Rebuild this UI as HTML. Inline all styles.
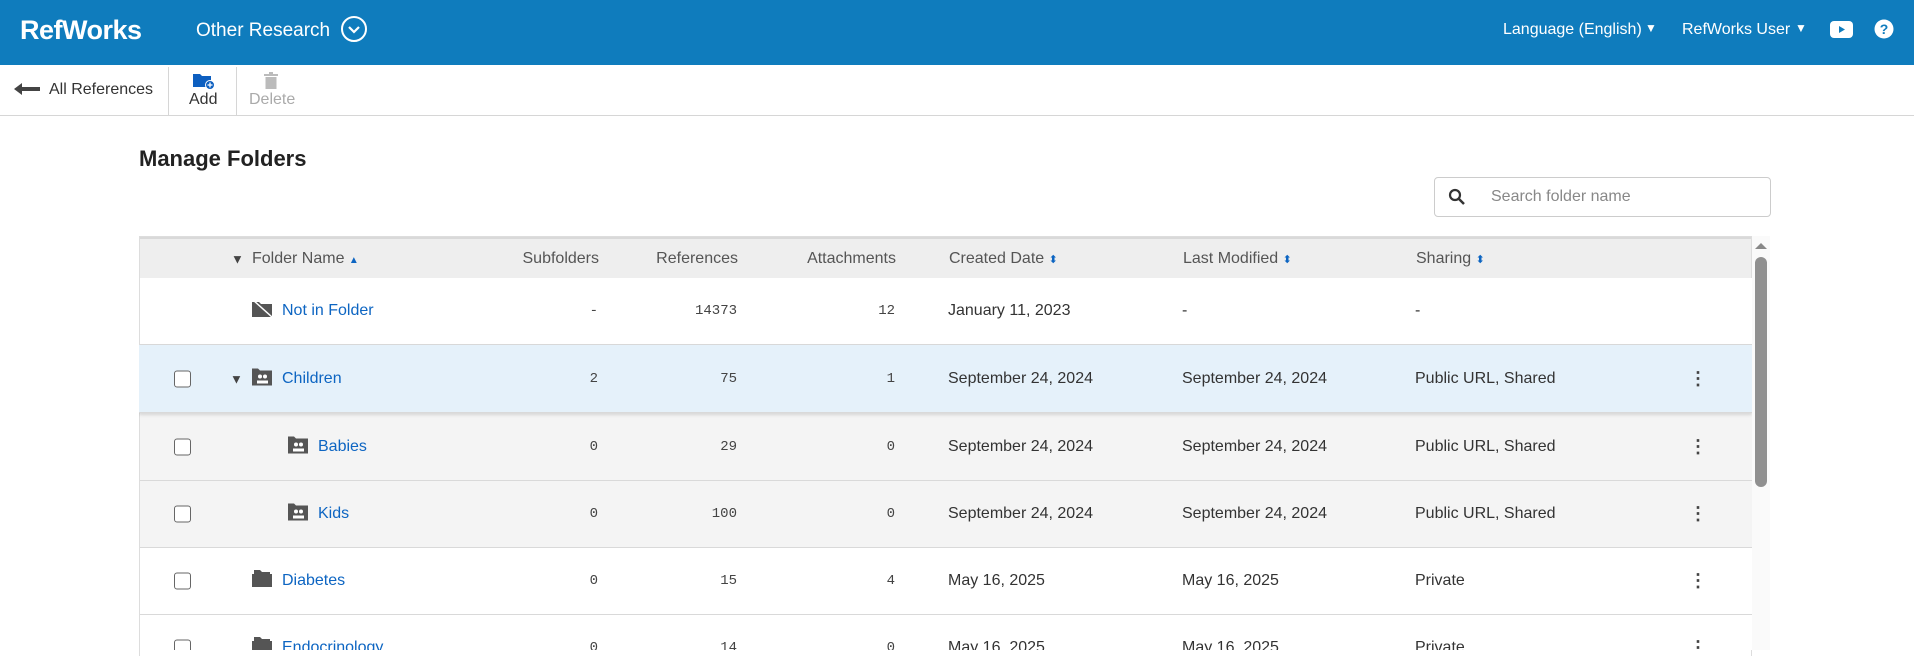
<!DOCTYPE html>
<html><head><meta charset="utf-8"><style>
*{box-sizing:border-box;margin:0;padding:0}
body{width:1914px;height:650px;overflow:hidden;background:#fff;font-family:"Liberation Sans",Arial,sans-serif;color:#333;position:relative}
.abs{position:absolute}
.hdr{left:0;top:0;width:1914px;height:65px;background:#0f7cbd;color:#fff}
.tb{left:0;top:65px;width:1914px;height:51px;border-bottom:1px solid #d6d6d6}
.table{left:139px;top:236px;width:1613px;height:420px;border:1px solid #ddd;border-bottom:none;overflow:hidden}
.row{position:absolute;left:0;width:1613px;border-bottom:1px solid #d9d9d9;font-size:16px}
.row span{position:absolute;top:50%;transform:translateY(-50%);white-space:nowrap}
.num{font-family:"Liberation Mono",monospace;font-size:14px;color:#444}
.link{color:#0d65c2}
.cb{width:17px;height:17px;border:1.5px solid #666;border-radius:3px;background:#fff}
.keb{font-weight:bold;font-size:18px;color:#444}
.hrow span{color:#555}
</style></head><body>
<div class="abs hdr">
 <div class="abs" style="left:20px;top:15px;font-size:27px;font-weight:bold;letter-spacing:-0.5px">RefWorks</div>
 <div class="abs" style="left:196px;top:20px;font-size:19px">Other Research</div>
 <svg class="abs" style="left:340px;top:15px" width="28" height="28" viewBox="0 0 28 28"><circle cx="14" cy="14" r="12" fill="none" stroke="#fff" stroke-width="2"/><path d="M9 12l5 5 5-5" fill="none" stroke="#fff" stroke-width="2.2"/></svg>
 <div class="abs" style="left:1503px;top:21px;font-size:16px">Language (English)</div>
 <div class="abs" style="left:1645px;top:21px;font-size:12px">▼</div>
 <div class="abs" style="left:1682px;top:21px;font-size:16px">RefWorks User</div>
 <div class="abs" style="left:1795px;top:21px;font-size:12px">▼</div>
 <svg class="abs" style="left:1830px;top:21px" width="23" height="17" viewBox="0 0 23 17"><rect width="23" height="17" rx="4" fill="#fff"/><path d="M9 5l6 3.5-6 3.5z" fill="#0f7cbd"/></svg>
 <svg class="abs" style="left:1874px;top:19px" width="20" height="20" viewBox="0 0 20 20"><circle cx="10" cy="10" r="9.5" fill="#fff"/><text x="10" y="15" text-anchor="middle" font-family="Liberation Sans" font-weight="bold" font-size="14" fill="#0f7cbd">?</text></svg>
</div>
<div class="abs tb">
 <svg class="abs" style="left:14px;top:17px" width="26" height="14" viewBox="0 0 26 14"><path d="M0 7l8-6v4h18v4H8v4z" fill="#444"/></svg>
 <div class="abs" style="left:49px;top:16px;font-size:16px;color:#333">All References</div>
 <div class="abs" style="left:168px;top:2px;width:1px;height:48px;background:#d6d6d6"></div>
 <svg class="abs" style="left:193px;top:7px" width="22" height="18" viewBox="0 0 22 18"><path d="M0 2h7l2 2h9v11H0z" fill="#0d5fc0"/><circle cx="17" cy="13" r="4.5" fill="#0d5fc0" stroke="#fff" stroke-width="1"/><path d="M17 10.5v5M14.5 13h5" stroke="#fff" stroke-width="1.3"/></svg>
 <div class="abs" style="left:189px;top:26px;font-size:16px;color:#333">Add</div>
 <div class="abs" style="left:236px;top:2px;width:1px;height:48px;background:#d6d6d6"></div>
 <svg class="abs" style="left:264px;top:7px" width="14" height="17" viewBox="0 0 14 17"><rect x="0" y="2" width="14" height="2" fill="#bbb"/><rect x="5" y="0" width="4" height="2" fill="#bbb"/><rect x="1.5" y="5" width="11" height="12" fill="#bbb"/></svg>
 <div class="abs" style="left:249px;top:26px;font-size:16px;color:#aaa">Delete</div>
</div>
<div class="abs" style="left:139px;top:146px;font-size:22px;font-weight:bold;color:#222">Manage Folders</div>
<div class="abs" style="left:1434px;top:177px;width:337px;height:40px;border:1px solid #ccc;border-radius:4px">
 <svg class="abs" style="left:13px;top:10px" width="18" height="18" viewBox="0 0 18 18"><circle cx="7" cy="7" r="5" fill="none" stroke="#333" stroke-width="2.2"/><path d="M11 11l5 5" stroke="#333" stroke-width="2.5"/></svg>
 <div class="abs" style="left:56px;top:10px;font-size:16px;color:#888">Search folder name</div>
</div>
<div class="abs table">
 <div class="row hrow" style="top:0;height:42px;background:#eee;border-top:2px solid #d9d9d9">
  <span style="left:91px;font-size:13px;color:#444">▼</span><span style="left:112px">Folder Name <small style="font-size:10px;color:#0d65c2">▲</small></span>
  <span style="right:1154px">Subfolders</span><span style="right:1015px">References</span><span style="right:857px">Attachments</span>
  <span style="left:809px">Created Date <small style="color:#0d65c2;font-size:11px">⬍</small></span>
  <span style="left:1043px">Last Modified <small style="color:#0d65c2;font-size:11px">⬍</small></span>
  <span style="left:1276px">Sharing <small style="color:#0d65c2;font-size:11px">⬍</small></span>
 </div>
</div>
<div class="abs" style="left:139px;top:278px;width:1613px;height:372px;overflow:hidden">
 <div class="row" style="top:0;height:67px;background:#fff">
  <span style="left:113px"><svg width="21" height="17" viewBox="0 0 21 17"><path d="M0 2h7l2 2h11v13H0z" fill="#555"/><path d="M1 0l19 17" stroke="#fff" stroke-width="1.5"/></svg></span>
  <span class="link" style="left:143px">Not in Folder</span>
  <span class="num" style="right:1154px">-</span><span class="num" style="right:1015px">14373</span><span class="num" style="right:857px">12</span>
  <span style="left:809px">January 11, 2023</span><span style="left:1043px">-</span><span style="left:1276px">-</span>
 </div>
 <div class="row" style="top:67px;height:68px;background:#e5f1fa;box-shadow:0 2px 3px rgba(0,0,0,.12);z-index:2">
  <span class="cb" style="left:35px"></span><span style="left:91px;font-size:13px;color:#444">▼</span>
  <span style="left:113px"><svg width="20" height="18" viewBox="0 0 20 18"><path d="M0 1h6l2 2h12v15H0z" fill="#555"/><circle cx="8" cy="9" r="2" fill="#fff"/><circle cx="13" cy="9" r="2" fill="#fff"/><path d="M5 16v-3h6v3M11 16v-3h5v3" fill="#fff"/></svg></span>
  <span class="link" style="left:143px">Children</span>
  <span class="num" style="right:1154px">2</span><span class="num" style="right:1015px">75</span><span class="num" style="right:857px">1</span>
  <span style="left:809px">September 24, 2024</span><span style="left:1043px">September 24, 2024</span><span style="left:1276px">Public URL, Shared</span><span class="keb" style="left:1550px">⋮</span>
 </div>
 <div class="row" style="top:135px;height:68px;background:#f4f4f4">
  <span class="cb" style="left:35px"></span>
  <span style="left:149px"><svg width="20" height="18" viewBox="0 0 20 18"><path d="M0 1h6l2 2h12v15H0z" fill="#555"/><circle cx="8" cy="9" r="2" fill="#fff"/><circle cx="13" cy="9" r="2" fill="#fff"/><path d="M5 16v-3h6v3M11 16v-3h5v3" fill="#fff"/></svg></span>
  <span class="link" style="left:179px">Babies</span>
  <span class="num" style="right:1154px">0</span><span class="num" style="right:1015px">29</span><span class="num" style="right:857px">0</span>
  <span style="left:809px">September 24, 2024</span><span style="left:1043px">September 24, 2024</span><span style="left:1276px">Public URL, Shared</span><span class="keb" style="left:1550px">⋮</span>
 </div>
 <div class="row" style="top:203px;height:67px;background:#f4f4f4">
  <span class="cb" style="left:35px"></span>
  <span style="left:149px"><svg width="20" height="18" viewBox="0 0 20 18"><path d="M0 1h6l2 2h12v15H0z" fill="#555"/><circle cx="8" cy="9" r="2" fill="#fff"/><circle cx="13" cy="9" r="2" fill="#fff"/><path d="M5 16v-3h6v3M11 16v-3h5v3" fill="#fff"/></svg></span>
  <span class="link" style="left:179px">Kids</span>
  <span class="num" style="right:1154px">0</span><span class="num" style="right:1015px">100</span><span class="num" style="right:857px">0</span>
  <span style="left:809px">September 24, 2024</span><span style="left:1043px">September 24, 2024</span><span style="left:1276px">Public URL, Shared</span><span class="keb" style="left:1550px">⋮</span>
 </div>
 <div class="row" style="top:270px;height:67px;background:#fff">
  <span class="cb" style="left:35px"></span>
  <span style="left:113px"><svg width="20" height="17" viewBox="0 0 20 17"><path d="M2 0h6l2 2h8v2H2z" fill="#555"/><path d="M0 4h20v13H0z" fill="#555"/></svg></span>
  <span class="link" style="left:143px">Diabetes</span>
  <span class="num" style="right:1154px">0</span><span class="num" style="right:1015px">15</span><span class="num" style="right:857px">4</span>
  <span style="left:809px">May 16, 2025</span><span style="left:1043px">May 16, 2025</span><span style="left:1276px">Private</span><span class="keb" style="left:1550px">⋮</span>
 </div>
 <div class="row" style="top:337px;height:67px;background:#fff">
  <span class="cb" style="left:35px"></span>
  <span style="left:113px"><svg width="20" height="17" viewBox="0 0 20 17"><path d="M2 0h6l2 2h8v2H2z" fill="#555"/><path d="M0 4h20v13H0z" fill="#555"/></svg></span>
  <span class="link" style="left:143px">Endocrinology</span>
  <span class="num" style="right:1154px">0</span><span class="num" style="right:1015px">14</span><span class="num" style="right:857px">0</span>
  <span style="left:809px">May 16, 2025</span><span style="left:1043px">May 16, 2025</span><span style="left:1276px">Private</span><span class="keb" style="left:1550px">⋮</span>
 </div>
</div>
<div class="abs" style="left:139px;top:236px;width:1px;height:414px;background:#ddd"></div>
<div class="abs" style="left:1752px;top:236px;width:18px;height:414px;background:#fafafa"></div>
<svg class="abs" style="left:1754px;top:242px" width="14" height="8" viewBox="0 0 14 8"><path d="M1 7l6-6 6 6z" fill="#888"/></svg>
<div class="abs" style="left:1755px;top:257px;width:12px;height:230px;border-radius:6px;background:#909090"></div>
</body></html>
